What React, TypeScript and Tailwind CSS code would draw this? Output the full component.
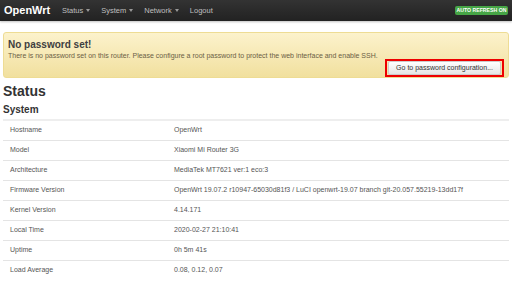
const rows: [string, string][] = [
  ['Hostname', 'OpenWrt'],
  ['Model', 'Xiaomi Mi Router 3G'],
  ['Architecture', 'MediaTek MT7621 ver:1 eco:3'],
  ['Firmware Version', 'OpenWrt 19.07.2 r10947-65030d81f3 / LuCI openwrt-19.07 branch git-20.057.55219-13dd17f'],
  ['Kernel Version', '4.14.171'],
  ['Local Time', '2020-02-27 21:10:41'],
  ['Uptime', '0h 5m 41s'],
  ['Load Average', '0.08, 0.12, 0.07'],
];

function Caret() {
  return <span className="ml-[3px] inline-block border-x-[2.5px] border-t-[3px] border-x-transparent border-t-[#999] align-middle" />;
}

export default function App() {
  return (
    <div className="min-h-screen bg-white font-['Liberation_Sans',Arial,sans-serif] text-[#555]">
      <header className="flex h-[21px] items-center bg-gradient-to-b from-[#333] to-[#222] pl-[4px] pr-[4px] shadow-[0_1px_2px_rgba(0,0,0,0.25)]">
        <span className="w-[46px] text-[11px] font-bold leading-none text-white">OpenWrt</span>
        <nav className="ml-[12px] flex items-center gap-[11px] text-[7.5px] text-[#bfbfbf]">
          <span>Status<Caret /></span>
          <span>System<Caret /></span>
          <span>Network<Caret /></span>
          <span>Logout</span>
        </nav>
        <span className="ml-auto rounded-[2px] bg-[#46a546] px-[1.5px] py-[1px] text-[5.2px] font-bold leading-[7px] text-white">AUTO REFRESH ON</span>
      </header>

      <main className="px-[3px] pt-[11px]">
        <div className="rounded-[3px] border border-[#eedc94] bg-gradient-to-b from-[#fcf2cc] to-[#f1e09e] px-[4px] pt-[6px]">
          <h4 className="text-[10px] font-bold leading-[11px] text-[#404040]">No password set!</h4>
          <p className="mt-[1px] text-[7px] leading-[9px] text-[#6b6045]">
            There is no password set on this router. Please configure a root password to protect the web interface and enable SSH.
          </p>
          <div className="-mt-[1px] flex justify-end">
            <span className="border-2 border-[#e00] px-[1px]">
              <span className="block rounded-[2px] border border-[#ccc] bg-gradient-to-b from-white to-[#e6e6e6] px-[7px] py-[2px] text-[7px] leading-[8px] text-[#333]">
                Go to password configuration...
              </span>
            </span>
          </div>
        </div>

        <h2 className="mt-[5px] text-[14px] font-bold leading-[16px] text-[#333]">Status</h2>
        <h3 className="mt-[5px] text-[10px] font-bold leading-[12px] text-[#333]">System</h3>

        <table className="mt-[3px] w-full border-collapse text-[7px]">
          <tbody>
            {rows.map(([k, v], i) => (
              <tr key={k} className={i === 0 ? 'border-t-2 border-[#eee]' : 'border-t border-[#e4e4e4]'}>
                <td className="h-[20px] w-[171px] pl-[7px] align-middle">{k}</td>
                <td className="h-[20px] align-middle">{v}</td>
              </tr>
            ))}
          </tbody>
        </table>
      </main>
    </div>
  );
}
